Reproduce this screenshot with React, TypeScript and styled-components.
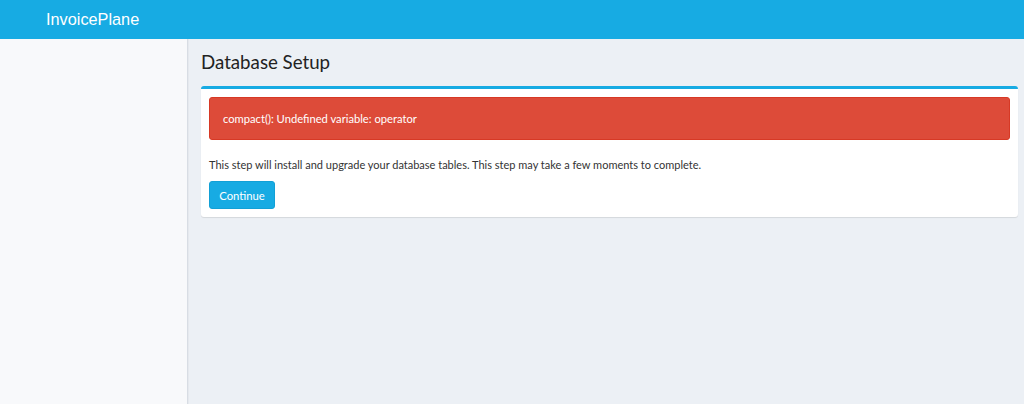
import React from "react";
import styled, { createGlobalStyle } from "styled-components";

const Global = createGlobalStyle`
  html, body { margin: 0; padding: 0; height: 100%; }
  body { font-family: Lato, "Open Sans", sans-serif; background: #ecf0f5; color: #333; }
  #root { min-height: 100%; }
  * { box-sizing: border-box; }
`;

const Page = styled.div`
  display: flex;
  flex-direction: column;
  height: 404px;
`;

const Navbar = styled.header`
  height: 39px;
  background: #17abe3;
  display: flex;
  align-items: center;
  padding-left: 46px;
  flex-shrink: 0;
`;

const Brand = styled.span`
  font-family: "Liberation Sans", Arial, sans-serif;
  font-size: 16.3px;
  color: #fff;
`;

const Body = styled.div`
  display: flex;
  flex: 1;
`;

const Sidebar = styled.aside`
  width: 188px;
  background: #f8f9fb;
  border-right: 1px solid #d8dde4;
  box-shadow: 1px 0 0 #e6e9ee;
  flex-shrink: 0;
`;

const Main = styled.main`
  flex: 1;
  padding: 11px 6px 0 13px;
`;

const Title = styled.h1`
  font-size: 18.7px;
  font-weight: 400;
  margin: 0 0 12px;
  line-height: 24px;
  color: #222;
`;

const Card = styled.section`
  background: #fff;
  border-top: 3px solid #17abe3;
  border-radius: 3px;
  box-shadow: 0 1px 1px rgba(0, 0, 0, 0.1);
  padding: 8px 8px 8px 8px;
`;

const Alert = styled.div`
  background: #dd4b39;
  border: 1px solid #d73925;
  border-radius: 3px;
  color: #fff;
  font-size: 11.2px;
  padding: 14px 13px;
  line-height: 13px;
`;

const Text = styled.p`
  font-size: 11px;
  margin: 18px 0 10px;
  line-height: 13px;
  color: #333;
`;

const Button = styled.button`
  background: #17abe3;
  border: 1px solid #12a0d6;
  border-radius: 3px;
  color: #fff;
  font-family: inherit;
  font-size: 11.3px;
  height: 28px;
  width: 66px;
  padding: 0;
  cursor: pointer;
  display: block;
`;

export default function App() {
  return (
    <>
      <Global />
      <Page>
        <Navbar>
          <Brand>InvoicePlane</Brand>
        </Navbar>
        <Body>
          <Sidebar />
          <Main>
            <Title>Database Setup</Title>
            <Card>
              <Alert>compact(): Undefined variable: operator</Alert>
              <Text>
                This step will install and upgrade your database tables. This step may take a few moments to complete.
              </Text>
              <Button>Continue</Button>
            </Card>
          </Main>
        </Body>
      </Page>
    </>
  );
}
